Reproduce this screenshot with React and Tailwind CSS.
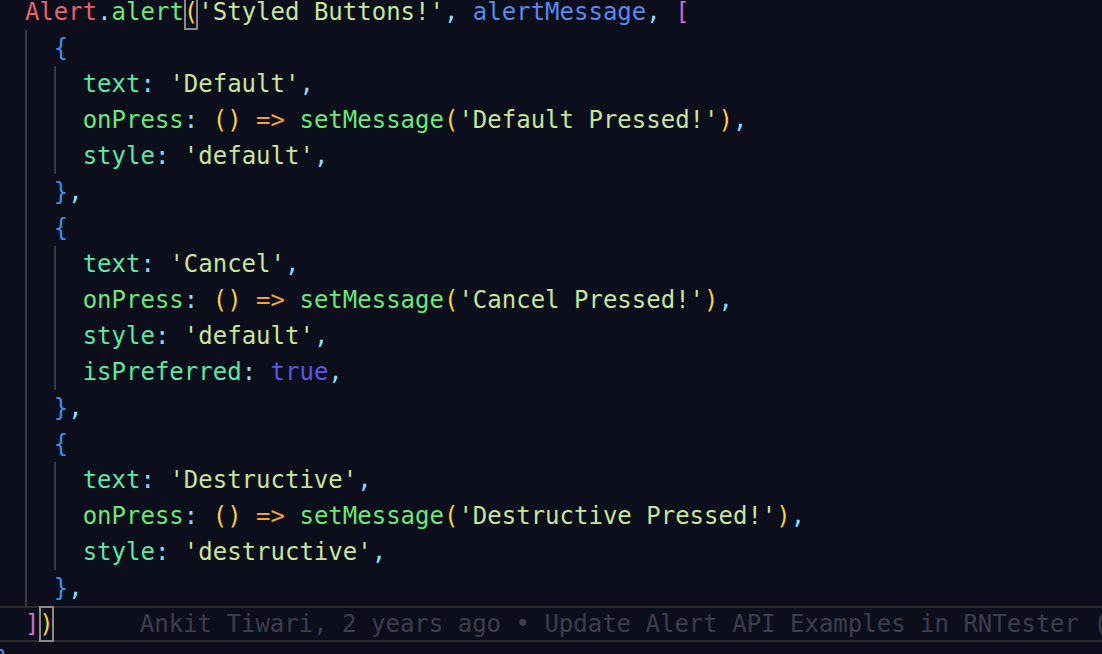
import React from "react";

const C = {
  r: "text-[#e8636e]",
  p: "text-[#89ddff]",
  g: "text-[#6ce77a]",
  k: "text-[#5ee6a6]",
  s: "text-[#c8e59b]",
  y: "text-[#f7cf45]",
  o: "text-[#f0a23f]",
  b: "text-[#5a89f0]",
  m: "text-[#c56fd1]",
  c: "text-[#3b8ee8]",
  t: "text-[#5858e6]",
};

const lines = [
  { g: 0, t: [["r", "Alert"], ["p", "."], ["g", "alert"], ["y", "(", true], ["s", "'Styled Buttons!'"], ["p", ", "], ["b", "alertMessage"], ["p", ", "], ["m", "["]] },
  { g: 1, t: [["c", "{"]] },
  { g: 2, t: [["k", "text"], ["p", ": "], ["s", "'Default'"], ["p", ","]] },
  { g: 2, t: [["g", "onPress"], ["p", ": "], ["y", "() "], ["o", "=> "], ["g", "setMessage"], ["y", "("], ["s", "'Default Pressed!'"], ["y", ")"], ["p", ","]] },
  { g: 2, t: [["k", "style"], ["p", ": "], ["s", "'default'"], ["p", ","]] },
  { g: 1, t: [["c", "}"], ["p", ","]] },
  { g: 1, t: [["c", "{"]] },
  { g: 2, t: [["k", "text"], ["p", ": "], ["s", "'Cancel'"], ["p", ","]] },
  { g: 2, t: [["g", "onPress"], ["p", ": "], ["y", "() "], ["o", "=> "], ["g", "setMessage"], ["y", "("], ["s", "'Cancel Pressed!'"], ["y", ")"], ["p", ","]] },
  { g: 2, t: [["k", "style"], ["p", ": "], ["s", "'default'"], ["p", ","]] },
  { g: 2, t: [["k", "isPreferred"], ["p", ": "], ["t", "true"], ["p", ","]] },
  { g: 1, t: [["c", "}"], ["p", ","]] },
  { g: 1, t: [["c", "{"]] },
  { g: 2, t: [["k", "text"], ["p", ": "], ["s", "'Destructive'"], ["p", ","]] },
  { g: 2, t: [["g", "onPress"], ["p", ": "], ["y", "() "], ["o", "=> "], ["g", "setMessage"], ["y", "("], ["s", "'Destructive Pressed!'"], ["y", ")"], ["p", ","]] },
  { g: 2, t: [["k", "style"], ["p", ": "], ["s", "'destructive'"], ["p", ","]] },
  { g: 1, t: [["c", "}"], ["p", ","]] },
];

function Tok({ k, text, box }) {
  if (box) {
    return (
      <span className={`relative ${C[k]}`}>
        {text}
        <span className="absolute left-0 right-0 top-[-4px] bottom-[-4px] shadow-[inset_0_0_0_2px_#8a8a8a]" />
      </span>
    );
  }
  return <span className={C[k]}>{text}</span>;
}

function Guide() {
  return <span className="inline-block shrink-0 w-[2ch] h-[36px] border-l-2 border-[#3a3a45]" />;
}

export default function App() {
  return (
    <div className="w-[1102px] h-[654px] overflow-hidden bg-[#0d0e1b]">
      <div
        className="mt-[-6px] ml-[-4px] text-[24px] leading-[36px] whitespace-pre"
        style={{ fontFamily: '"DejaVu Sans Mono", "Liberation Mono", monospace' }}
      >
        {lines.map((ln, i) => (
          <div key={i} className="h-[36px] flex items-start">
            <span className="inline-block shrink-0 w-[2ch] h-[36px]" />
            {ln.g >= 1 ? <Guide /> : null}
            {ln.g >= 2 ? <Guide /> : null}
            <span className="shrink-0">
              {ln.t.map(([k, text, box], j) => (
                <Tok key={j} k={k} text={text} box={box} />
              ))}
            </span>
          </div>
        ))}
        <div className="h-[36px] flex items-start shadow-[inset_0_2px_0_#2b2b30,inset_0_-2px_0_#2b2b30]">
          <span className="inline-block shrink-0 w-[2ch] h-[36px]" />
          <span className="shrink-0">
            <Tok k="m" text="]" />
            <Tok k="y" text=")" box />
          </span>
          <span className="shrink-0 ml-[86px] text-[#3d3e4c]">Ankit Tiwari, 2 years ago • Update Alert API Examples in RNTester (</span>
        </div>
        <div className="h-[36px]">
          <span className={C.c}>{"}"}</span>
        </div>
      </div>
    </div>
  );
}
